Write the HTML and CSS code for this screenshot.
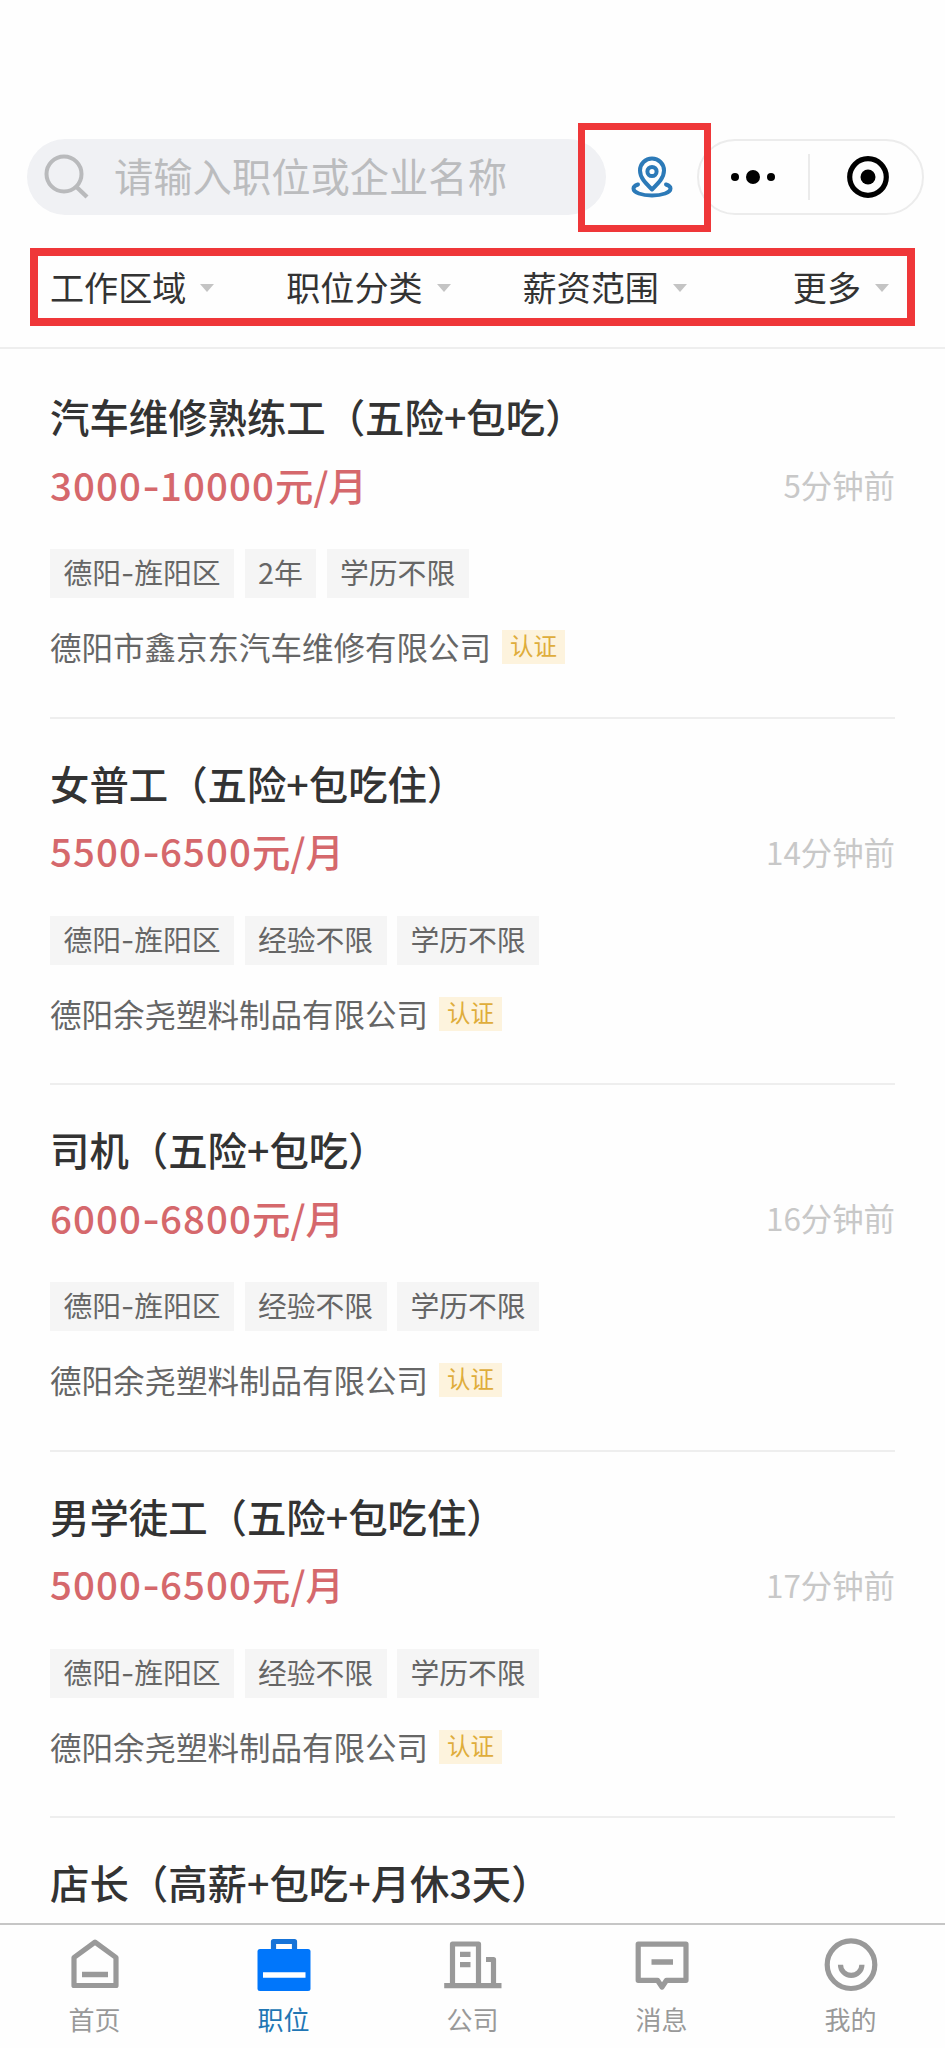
FILE: index.html
```html
<!DOCTYPE html>
<html lang="zh-CN">
<head>
<meta charset="utf-8">
<title>职位</title>
<link rel="stylesheet" href="styles.css">
</head>
<body>
<div class="app">
  <header class="topbar">
    <div class="search">
      <svg class="search-icon" viewBox="0 0 48 48" width="48" height="48"><g fill="none" stroke="#b9babc" stroke-width="4"><circle cx="21" cy="21" r="17.5"/><path d="M33 33.5L44 44" stroke-width="4.4"/></g></svg>
      <span class="placeholder">请输入职位或企业名称</span>
    </div>
    <div class="locate">
      <svg viewBox="0 0 44 44" width="44" height="44"><g fill="none" stroke="#2c7ab8" stroke-width="4" stroke-linejoin="round" stroke-linecap="round"><path d="M22 34.500C15 27.500 10 22.500 10 15.500a12 12 0 0 1 24 0C34 22.500 29 27.500 22 34.500z"/><circle cx="22" cy="16.500" r="4.600"/><path d="M8 29.500C5 30.500 3.500 31.800 3.500 33.500c0 4 8 7 18.500 7s18.500-3 18.500-7c0-1.700-1.500-3-4.500-4"/></g></svg>
    </div>
    <div class="capsule">
      <div class="capsule-half capsule-menu"><svg viewBox="0 0 50 20" width="50" height="20"><circle cx="7" cy="10" r="4"/><circle cx="25" cy="10" r="7"/><circle cx="43" cy="10" r="4"/></svg></div>
      <div class="capsule-line"></div>
      <div class="capsule-half capsule-close"><svg viewBox="0 0 44 44" width="44" height="44"><circle cx="22" cy="22" r="18.300" fill="none" stroke="#000" stroke-width="5.200"/><circle cx="22" cy="22" r="7.500"/></svg></div>
    </div>
    <div class="mark mark-locate"></div>
  </header>

  <nav class="filters">
    <div class="filter">工作区域<i class="caret"></i></div>
    <div class="filter">职位分类<i class="caret"></i></div>
    <div class="filter">薪资范围<i class="caret"></i></div>
    <div class="filter">更多<i class="caret"></i></div>
    <div class="mark mark-filters"></div>
  </nav>

  <main class="list">
    <article class="job">
      <h2 class="title">汽车维修熟练工（五险+包吃）</h2>
      <div class="row"><div class="salary"><span class="num">3000<span class="dash">-</span>10000</span>元/月</div><div class="time">5分钟前</div></div>
      <div class="tags"><span class="tag">德阳<span class="dash">-</span>旌阳区</span><span class="tag">2年</span><span class="tag">学历不限</span></div>
      <div class="company">德阳市鑫京东汽车维修有限公司<span class="badge">认证</span></div>
    </article>
    <article class="job">
      <h2 class="title">女普工（五险+包吃住）</h2>
      <div class="row"><div class="salary"><span class="num">5500<span class="dash">-</span>6500</span>元/月</div><div class="time">14分钟前</div></div>
      <div class="tags"><span class="tag">德阳<span class="dash">-</span>旌阳区</span><span class="tag">经验不限</span><span class="tag">学历不限</span></div>
      <div class="company">德阳余尧塑料制品有限公司<span class="badge">认证</span></div>
    </article>
    <article class="job">
      <h2 class="title">司机（五险+包吃）</h2>
      <div class="row"><div class="salary"><span class="num">6000<span class="dash">-</span>6800</span>元/月</div><div class="time">16分钟前</div></div>
      <div class="tags"><span class="tag">德阳<span class="dash">-</span>旌阳区</span><span class="tag">经验不限</span><span class="tag">学历不限</span></div>
      <div class="company">德阳余尧塑料制品有限公司<span class="badge">认证</span></div>
    </article>
    <article class="job">
      <h2 class="title">男学徒工（五险+包吃住）</h2>
      <div class="row"><div class="salary"><span class="num">5000<span class="dash">-</span>6500</span>元/月</div><div class="time">17分钟前</div></div>
      <div class="tags"><span class="tag">德阳<span class="dash">-</span>旌阳区</span><span class="tag">经验不限</span><span class="tag">学历不限</span></div>
      <div class="company">德阳余尧塑料制品有限公司<span class="badge">认证</span></div>
    </article>
    <article class="job">
      <h2 class="title">店长（高薪+包吃+月休3天）</h2>
    </article>
  </main>

  <footer class="tabbar">
    <div class="tab">
      <svg viewBox="0 0 60 60" width="60" height="60"><path d="M9 22.500L30 7.200 51 22.500V50.500H9z" fill="none" stroke="#999" stroke-width="5.200" stroke-linejoin="round"/><path d="M17 39.500H43" stroke="#999" stroke-width="5.500"/></svg>
      <span>首页</span>
    </div>
    <div class="tab active">
      <svg viewBox="0 0 60 60" width="60" height="60"><path d="M19.500 17V6.500H40.500V17" fill="none" stroke="#1673d8" stroke-width="5.200" stroke-linejoin="round"/><rect x="3.500" y="14" width="53" height="42" rx="2.500" fill="#0076fb"/><path d="M9 40H51.500" stroke="#fff" stroke-width="5.500"/></svg>
      <span>职位</span>
    </div>
    <div class="tab">
      <svg viewBox="0 0 60 60" width="60" height="60"><g fill="none" stroke="#999" stroke-width="5.200" stroke-linejoin="round"><path d="M1.200 50.700H58.500"/><path d="M9.500 50V9H35.500V50M43 24.500H50.500V50"/><path d="M17 19.300H27.500M17 29.700H27.500"/></g></svg>
      <span>公司</span>
    </div>
    <div class="tab">
      <svg viewBox="0 0 60 60" width="60" height="60"><path d="M6.200 9.200H54V45.300H34.500L30 52 25.500 45.300H6.200z" fill="none" stroke="#999" stroke-width="5.200" stroke-linejoin="round"/><path d="M19.500 27H41" stroke="#999" stroke-width="5.500"/></svg>
      <span>消息</span>
    </div>
    <div class="tab">
      <svg viewBox="0 0 60 60" width="60" height="60"><g fill="none" stroke="#999" stroke-width="5.200"><circle cx="30" cy="29.700" r="23.800"/><path d="M19.500 29.700a10.700 10.700 0 0 0 21.400 0"/></g></svg>
      <span>我的</span>
    </div>
  </footer>
</div>
</body>
</html>
```

FILE: styles.css
```css
* { box-sizing: border-box; }

body {
  margin: 0;
  background: #fefefe;
  font-family: "Noto Sans CJK SC", sans-serif;
  color: #333;
}

.app {
  width: 945px;
  height: 2048px;
  display: flex;
  flex-direction: column;
  overflow: hidden;
}

.topbar {
  position: relative;
  flex: none;
  height: 232px;
  padding: 139px 21px 0 27px;
  display: flex;
  align-items: flex-start;
}

.search {
  width: 579px;
  height: 76px;
  border-radius: 38px;
  background: #f0f1f4;
  display: flex;
  align-items: center;
  padding-left: 16px;
}

.search-icon { flex: none; }

.placeholder {
  margin-left: 23px;
  font-size: 39.300px;
  line-height: 70px;
  color: #bbbcbe;
  white-space: nowrap;
  padding-bottom: 5px;
}

.locate {
  width: 91px;
  height: 76px;
  display: flex;
  align-items: center;
  justify-content: center;
}

.capsule {
  width: 227px;
  height: 76px;
  border: 2px solid #ececec;
  border-radius: 38px;
  display: flex;
  align-items: center;
}

.capsule-half {
  flex: 1;
  display: flex;
  justify-content: center;
}

.capsule-menu { padding-right: 1px; }

.capsule-close { padding-left: 4px; }

.capsule-half svg { display: block; }

.capsule-line {
  width: 2px;
  height: 46px;
  background: #ebebeb;
}

.mark {
  position: absolute;
  border: 7.500px solid #ef3739;
}

.mark-locate {
  left: 578px;
  top: 123px;
  width: 133px;
  height: 109px;
}

.mark-filters {
  left: 30px;
  top: 16px;
  width: 885px;
  height: 78px;
  border-width: 8px;
}

.filters {
  position: relative;
  flex: none;
  height: 117px;
  padding: 28px 56px 0 50px;
  border-bottom: 2px solid #eee;
  display: flex;
  justify-content: space-between;
  align-items: flex-start;
}

.filter {
  display: flex;
  align-items: center;
  font-size: 34.100px;
  line-height: 52px;
  white-space: nowrap;
}

.filter:nth-child(3) { margin-right: 34px; }

.caret {
  margin: 4px 0 0 14px;
  border: 7.500px solid transparent;
  border-top: 8px solid #c4c4c4;
  border-bottom: 0;
}

.list {
  flex: 1;
  min-height: 0;
  padding: 0 50px;
  overflow: hidden;
}

.job {
  height: 366.600px;
  padding-top: 34px;
  border-bottom: 2.500px solid #eee;
}

.job:first-child { height: 369.500px; padding-top: 37px; }

.title {
  margin: 0;
  font-size: 39.400px;
  line-height: 60px;
  font-weight: 500;
  white-space: nowrap;
}

.row {
  margin-top: 9px;
  height: 60px;
  display: flex;
  align-items: center;
  justify-content: space-between;
}

.salary {
  font-size: 38.400px;
  line-height: 60px;
  font-weight: 500;
  color: #d5686c;
}

.num { letter-spacing: 1.150px; }

.dash { font-family: Inter, sans-serif; letter-spacing: 0; }

.time {
  font-size: 31.400px;
  line-height: 46px;
  color: #c8c8c8;
}

.tags {
  margin-top: 34px;
  display: flex;
  gap: 10.500px;
}

.tag {
  height: 49px;
  padding: 0 13.400px;
  background: #f5f5f5;
  font-size: 28.800px;
  line-height: 45px;
  color: #666;
}

.company {
  margin-top: 24px;
  height: 48px;
  display: flex;
  align-items: center;
  font-size: 31.500px;
  line-height: 48px;
  color: #666;
}

.badge {
  margin: 2px 0 0 11px;
  width: 63px;
  height: 34px;
  background: #fdf3dd;
  color: #dfad3b;
  font-size: 23.500px;
  line-height: 31px;
  text-align: center;
}

.tabbar {
  flex: none;
  height: 125px;
  border-top: 2px solid #c6c6c6;
  display: flex;
}

.tab {
  flex: 1;
  display: flex;
  flex-direction: column;
  align-items: center;
  padding-top: 10px;
  font-size: 26px;
  line-height: 36px;
  color: #999;
}

.tab svg { display: block; }

.tab span { margin-top: 6px; }

.tab.active { color: #2176b4; }
```
